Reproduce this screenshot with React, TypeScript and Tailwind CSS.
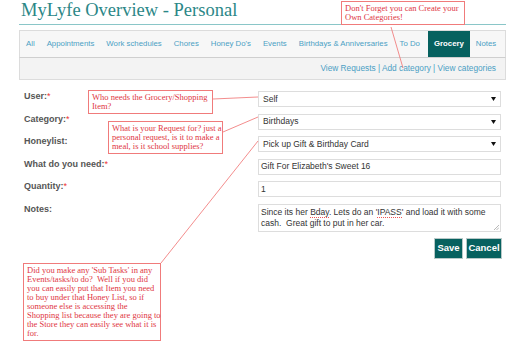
import React from "react";

const navItems = [
  "All",
  "Appointments",
  "Work schedules",
  "Chores",
  "Honey Do's",
  "Events",
  "Birthdays & Anniversaries",
  "To Do",
  "Grocery",
  "Notes",
];

type Row = { label: string; required: boolean; kind: "select" | "input"; value: string };

const rows: Row[] = [
  { label: "User:", required: true, kind: "select", value: "Self" },
  { label: "Category:", required: true, kind: "select", value: "Birthdays" },
  { label: "Honeylist:", required: false, kind: "select", value: "Pick up Gift & Birthday Card" },
  { label: "What do you need:", required: true, kind: "input", value: "Gift For Elizabeth's Sweet 16" },
  { label: "Quantity:", required: true, kind: "input", value: "1" },
];

function Label({ text, required }: { text: string; required: boolean }) {
  return (
    <div className="w-[239px] shrink-0 pl-[5px] text-[9px] font-bold leading-[11px] text-[#555]">
      {text}
      {required && <span className="font-normal text-[#e33]">*</span>}
    </div>
  );
}

function Field({ row }: { row: Row }) {
  return (
    <div className="flex h-[16px] w-[243px] items-center justify-between border border-[#ddd] bg-white text-[8.5px] text-[#333]">
      <span className={row.kind === "select" ? "pl-[4px]" : "pl-[2px]"}>{row.value}</span>
      {row.kind === "select" && (
        <svg width="5" height="4" viewBox="0 0 5 4" className="mr-[4px]">
          <polygon points="0,0 5,0 2.5,4" fill="#111" />
        </svg>
      )}
    </div>
  );
}

function Note({ className, lines }: { className: string; lines: string[] }) {
  return (
    <div
      className={
        "absolute border border-[#f07b7b] bg-white px-[3px] py-[2px] text-[8.5px] leading-[9px] text-[#e0363f] " +
        className
      }
      style={{ fontFamily: '"Liberation Serif", serif' }}
    >
      {lines.map((l, i) => (
        <div key={i} className="whitespace-pre">
          {l}
        </div>
      ))}
    </div>
  );
}

function Spell({ children }: { children: React.ReactNode }) {
  return <span className="border-b border-dotted border-[#e55]">{children}</span>;
}

export default function App() {
  return (
    <div
      className="relative h-[346px] w-[512px] overflow-hidden bg-white"
      style={{ fontFamily: '"Liberation Sans", Arial, sans-serif' }}
    >
      <div className="pl-[19px] pr-[6px]">
        {/* title */}
        <div className="border-b border-[#8ac6c8] pl-[2px] pb-[3px]">
          <h1
            className="text-[18.5px] leading-[21px] text-[#2b8787]"
            style={{ fontFamily: '"Liberation Serif", serif' }}
          >
            MyLyfe Overview - Personal
          </h1>
        </div>

        {/* nav */}
        <div className="mt-[5px] flex h-[28px] whitespace-nowrap border border-[#dcdcdc] border-b-[#cfcfcf] bg-[#f7f7f7]">
          {navItems.map((item) =>
            item === "Grocery" ? (
              <div
                key={item}
                className="ml-[2px] flex items-center bg-[#07615f] px-[6px] text-[7.8px] font-bold text-white"
              >
                {item}
              </div>
            ) : (
              <div key={item} className="flex items-center px-[6px] text-[7.8px] text-[#4b9fc4]">
                {item}
              </div>
            )
          )}
        </div>
        <div className="flex h-[22px] items-center justify-end whitespace-nowrap border-x border-b border-[#dcdcdc] bg-[#f3f3f3] pr-[9px] text-[8.3px] text-[#4b9fc4]">
          View Requests | Add category | View categories
        </div>

        {/* form */}
        <div className="mt-[11px] flex flex-col gap-[6.5px]">
          {rows.map((row) => (
            <div key={row.label} className="flex items-start">
              <Label text={row.label} required={row.required} />
              <Field row={row} />
            </div>
          ))}
          <div className="flex items-start">
            <Label text="Notes:" required={false} />
            <div className="relative h-[28px] w-[243px] border border-[#ddd] bg-white px-[2px] pt-[2px] text-[8.5px] leading-[11px] text-[#333]">
              <div className="whitespace-pre">
                <span>Since its her </span>
                <Spell>Bday</Spell>
                <span>. Lets do an '</span>
                <Spell>IPASS</Spell>
                <span>' and load it with some</span>
              </div>
              <div className="whitespace-pre">cash.  Great gift to put in her car.</div>
              <svg width="5" height="5" viewBox="0 0 5 5" className="absolute bottom-[1px] right-[1px]">
                <line x1="0" y1="5" x2="5" y2="0" stroke="#999" strokeWidth="0.7" />
                <line x1="2.5" y1="5" x2="5" y2="2.5" stroke="#999" strokeWidth="0.7" />
              </svg>
            </div>
          </div>
        </div>
        <div className="mt-[6px] flex justify-end gap-[3px] pr-[4px]">
          <button className="h-[21px] w-[29px] border border-[#b8c9c8] bg-[#07615f] text-[9.5px] font-bold text-white">
            Save
          </button>
          <button className="h-[21px] w-[36px] border border-[#b8c9c8] bg-[#07615f] text-[9.5px] font-bold text-white">
            Cancel
          </button>
        </div>
      </div>

      {/* annotation lines */}
      <svg className="pointer-events-none absolute left-0 top-0" width="512" height="346">
        <g stroke="#f07070" strokeWidth="0.8">
          <line x1="391" y1="27" x2="403" y2="68" />
          <line x1="213" y1="99" x2="258" y2="97" />
          <line x1="223" y1="132" x2="258" y2="117" />
          <line x1="161" y1="263" x2="258" y2="141" />
        </g>
      </svg>

      <Note className="left-[341px] top-[1px] w-[124px]" lines={["Don't Forget you can Create your", "Own Categories!"]} />
      <Note className="left-[88px] top-[90px] w-[125px]" lines={["Who needs the Grocery/Shopping", "Item?"]} />
      <Note
        className="left-[108px] top-[121px] w-[115px]"
        lines={["What is your Request for? just a", "personal request, is it to make a", "meal, is it school supplies?"]}
      />
      <Note
        className="left-[23px] top-[263px] w-[138px]"
        lines={[
          "Did you make any 'Sub Tasks' in any",
          "Events/tasks/to do?  Well if you did",
          "you can easily put that Item you need",
          "to buy under that Honey List, so if",
          "someone else is accessing the",
          "Shopping list because they are going to",
          "the Store they can easily see what it is",
          "for.",
        ]}
      />
    </div>
  );
}
